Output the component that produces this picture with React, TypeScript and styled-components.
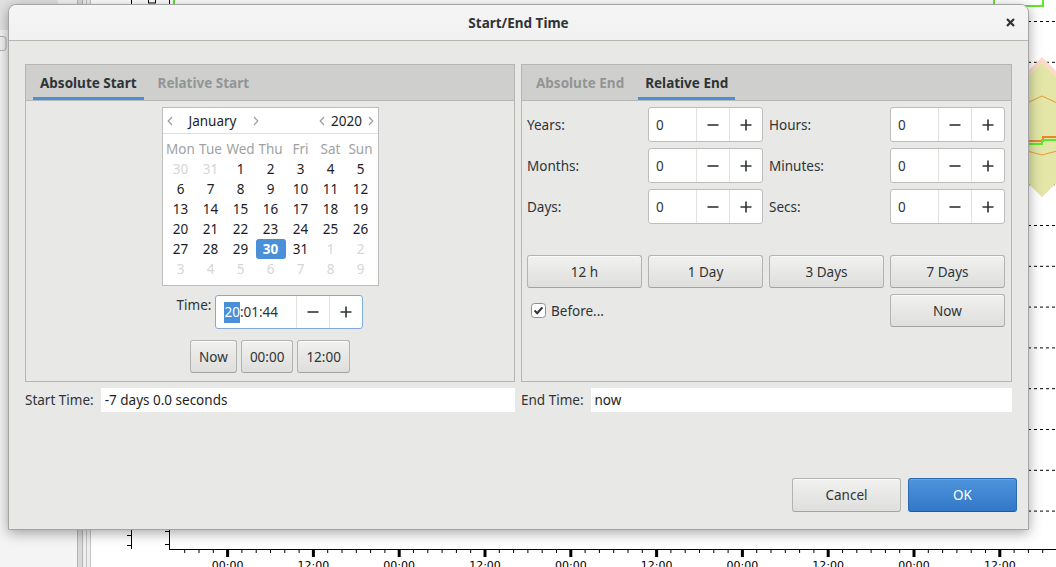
import React from "react";
import styled, { createGlobalStyle } from "styled-components";

const GlobalStyle = createGlobalStyle`
  html, body {
    margin: 0;
    padding: 0;
  }
  body {
    font-family: "Noto Sans", "Open Sans", sans-serif;
    font-size: 13.5px;
    color: #2e3436;
    overflow: hidden;
  }
`;

const Desktop = styled.div`
  position: relative;
  width: 1056px;
  height: 567px;
  overflow: hidden;
  background: #fff;
`;

const Chart = styled.svg`
  display: block;
`;

const Dialog = styled.div`
  position: absolute;
  left: 8px;
  top: 4px;
  width: 1021px;
  height: 526px;
  box-sizing: border-box;
  border: 1px solid #a4a4a2;
  border-radius: 8px 8px 0 0;
  background: #e8e8e7;
  box-shadow: 0 3px 13px rgba(0, 0, 0, 0.35);
  display: flex;
  flex-direction: column;
`;

const TitleBar = styled.div`
  height: 36px;
  box-sizing: border-box;
  flex: none;
  display: grid;
  grid-template-columns: 1fr auto 1fr;
  align-items: center;
  background: linear-gradient(#f5f5f5, #f1f1f1);
  border-bottom: 1px solid #b6b6b3;
  border-radius: 7px 7px 0 0;
`;

const Title = styled.div`
  grid-column: 2;
  font-weight: bold;
`;

const CloseButton = styled.div`
  justify-self: end;
  margin-right: 13px;
  display: flex;
`;

const Body = styled.div`
  flex: 1;
  display: flex;
  flex-direction: column;
  padding: 23px 16px 0;
`;

const PanelGrid = styled.div`
  display: grid;
  grid-template-columns: 490px 491px;
  grid-template-rows: 318px 24px;
  column-gap: 6px;
  row-gap: 6px;
`;

const Panel = styled.div`
  box-sizing: border-box;
  border: 1px solid #b6b6b3;
  display: flex;
  flex-direction: column;
`;

const TabHeader = styled.div`
  height: 36px;
  box-sizing: border-box;
  flex: none;
  display: flex;
  gap: 7px;
  padding-left: 7px;
  background: #cfcfcd;
  border-bottom: 1px solid #b6b6b3;
`;

const Tab = styled.div<{ $active?: boolean }>`
  box-sizing: border-box;
  display: flex;
  align-items: center;
  padding: 3px 7px 0;
  font-weight: bold;
  color: ${(p) => (p.$active ? "#2e3436" : "#929595")};
  border-bottom: 3px solid ${(p) => (p.$active ? "#4a90d9" : "transparent")};
`;

const StartBody = styled.div`
  display: flex;
  flex-direction: column;
  align-items: center;
  padding-top: 6px;
`;

const Calendar = styled.div`
  width: 217px;
  height: 179px;
  box-sizing: border-box;
  background: #fff;
  border: 1px solid #bdbdbb;
`;

const CalHeader = styled.div`
  height: 26px;
  box-sizing: border-box;
  border-bottom: 1px solid #dfdfdd;
  display: flex;
  justify-content: space-between;
  align-items: center;
`;

const CalGroup = styled.div`
  display: flex;
  align-items: center;
`;

const Arrow = styled.div<{ $w?: number }>`
  width: ${(p) => p.$w ?? 14}px;
  display: flex;
  justify-content: center;
`;

const CalLabel = styled.div<{ $w: number }>`
  width: ${(p) => p.$w}px;
  text-align: center;
  color: #1e1e1e;
`;

const DayGrid = styled.div`
  display: grid;
  grid-template-columns: repeat(7, 30px);
  grid-auto-rows: 20px;
  padding: 5px 0 0 3px;
`;

const DayCell = styled.div<{ $kind: "head" | "other" | "day" | "sel" }>`
  display: flex;
  align-items: center;
  justify-content: center;
  border-radius: 3px;
  color: ${(p) =>
    p.$kind === "head"
      ? "#a0a2a2"
      : p.$kind === "other"
      ? "#d6d6d6"
      : p.$kind === "sel"
      ? "#fff"
      : "#1e1e1e"};
  background: ${(p) => (p.$kind === "sel" ? "#4a90d9" : "transparent")};
  font-weight: ${(p) => (p.$kind === "sel" ? "bold" : "normal")};
`;

const TimeRow = styled.div`
  display: flex;
  align-items: flex-start;
  gap: 4px;
  margin-top: 9px;
`;

const TimeLabel = styled.div`
  line-height: 20px;
`;

const Spin = styled.div<{ $w: number; $h: number; $focus?: boolean }>`
  width: ${(p) => p.$w}px;
  height: ${(p) => p.$h}px;
  box-sizing: border-box;
  display: flex;
  background: #fff;
  border: 1px solid ${(p) => (p.$focus ? "#80aadb" : "#bdbdbb")};
  border-radius: 3px;
`;

const SpinEntry = styled.div`
  flex: 1;
  display: flex;
  align-items: center;
  padding-left: 7px;
`;

const SpinButton = styled.div`
  width: 33px;
  box-sizing: border-box;
  border-left: 1px solid #e2e2e0;
  display: flex;
  align-items: center;
  justify-content: center;
`;

const Selected = styled.span`
  background: #4a90d9;
  color: #fff;
  line-height: 21px;
`;

const ButtonRow = styled.div`
  display: flex;
  gap: 4px;
  margin-top: 11px;
`;

const Button = styled.div<{ $primary?: boolean; $w?: number; $h?: number }>`
  height: ${(p) => p.$h ?? 33}px;
  width: ${(p) => (p.$w ? `${p.$w}px` : "auto")};
  box-sizing: border-box;
  padding: 0 8px;
  display: flex;
  align-items: center;
  justify-content: center;
  border-radius: 3px;
  border: 1px solid ${(p) => (p.$primary ? "#2a6bb4" : "#b3b3b0")};
  border-bottom-color: ${(p) => (p.$primary ? "#215a9a" : "#a3a3a0")};
  color: ${(p) => (p.$primary ? "#fff" : "#2e3436")};
  background: ${(p) =>
    p.$primary
      ? "linear-gradient(#4d93dc, #3278c7)"
      : "linear-gradient(#f1f1f0, #dededc)"};
  box-shadow: inset 0 1px rgba(255, 255, 255, ${(p) => (p.$primary ? 0.15 : 0.8)});
`;

const EndBody = styled.div`
  padding: 6px 6px 0 5px;
`;

const FormGrid = styled.div<{ $rows: number; $top?: number }>`
  display: grid;
  grid-template-columns: repeat(4, 115px);
  grid-auto-rows: ${(p) => p.$rows}px;
  column-gap: 6px;
  row-gap: 6px;
  margin-top: ${(p) => p.$top ?? 0}px;
`;

const FieldLabel = styled.div`
  display: flex;
  align-items: center;
`;

const CheckCell = styled.div`
  display: flex;
  align-items: center;
  gap: 5px;
  padding-left: 4px;
`;

const LastCell = styled.div`
  grid-column: 4;
  display: flex;
`;

const FieldRow = styled.div`
  display: flex;
  align-items: center;
  gap: 7px;
  white-space: nowrap;
`;

const FieldEntry = styled.div`
  flex: 1;
  height: 100%;
  display: flex;
  align-items: center;
  padding-left: 4px;
  background: #fff;
  color: #1e1e1e;
`;

const Footer = styled.div`
  margin-top: auto;
  margin-right: -5px;
  padding-bottom: 17px;
  display: flex;
  justify-content: flex-end;
  gap: 7px;
`;

const Chevron = ({ dir }: { dir: "l" | "r" }) => (
  <svg width="6" height="10" viewBox="0 0 6 10">
    <path
      d={dir === "l" ? "M5 1 L1.2 5 L5 9" : "M1 1 L4.8 5 L1 9"}
      fill="none"
      stroke="#9a9c9c"
      strokeWidth="1.2"
    />
  </svg>
);

const Minus = () => (
  <svg width="12" height="12" viewBox="0 0 12 12">
    <path d="M0.5 6 H11.5" stroke="#2e3436" strokeWidth="1.6" />
  </svg>
);

const Plus = () => (
  <svg width="12" height="12" viewBox="0 0 12 12">
    <path d="M0.5 6 H11.5 M6 0.5 V11.5" stroke="#2e3436" strokeWidth="1.6" />
  </svg>
);

const Check = () => (
  <svg width="15" height="15" viewBox="0 0 15 15">
    <rect x="0.5" y="0.5" width="14" height="14" rx="3" fill="#fff" stroke="#8f8f8d" />
    <path d="M3.6 7.6 L6.2 10.2 L11.4 4.4" fill="none" stroke="#2e3436" strokeWidth="2.1" />
  </svg>
);

const CloseIcon = () => (
  <svg width="9" height="9" viewBox="0 0 9 9">
    <path d="M1 1 L8 8 M8 1 L1 8" stroke="#2e3436" strokeWidth="2.2" />
  </svg>
);

const SpinBox = ({ w, h, focus, children }: { w: number; h: number; focus?: boolean; children: React.ReactNode }) => (
  <Spin $w={w} $h={h} $focus={focus}>
    <SpinEntry>{children}</SpinEntry>
    <SpinButton>
      <Minus />
    </SpinButton>
    <SpinButton>
      <Plus />
    </SpinButton>
  </Spin>
);

const ChartBackground = () => {
  const dashes = Array.from({ length: 13 }, (_, k) => 21 + 40.8 * k);
  const ticks: React.ReactNode[] = [];
  for (let j = -4; j < 62; j++) {
    const x = 227.6 + 14.3 * j;
    if (x < 171 || x > 1056) continue;
    const major = ((j % 6) + 6) % 6 === 0;
    if (major) {
      const k = Math.round(j / 6);
      ticks.push(
        <g key={j}>
          <line x1={x} y1={549} x2={x} y2={557} stroke="#000" strokeWidth="3" />
          <text x={x} y={569} fontFamily="DejaVu Sans, sans-serif" fontSize="11" textAnchor="middle" fill="#000">
            {k % 2 === 0 ? "00:00" : "12:00"}
          </text>
        </g>
      );
    } else {
      ticks.push(<line key={j} x1={x} y1={549} x2={x} y2={553} stroke="#000" strokeWidth="1" />);
    }
  }
  return (
    <Chart width="1056" height="567" viewBox="0 0 1056 567">
      <rect x="0" y="0" width="1056" height="567" fill="#fff" />
      <rect x="0" y="0" width="77" height="567" fill="#f4f4f4" />
      <rect x="0" y="0" width="58" height="30" fill="#e2e2e2" />
      <rect x="-6" y="36.5" width="12" height="14" rx="3" fill="#f2f2f2" stroke="#b0b0b0" />
      <rect x="77" y="0" width="5" height="567" fill="#d8d8d8" />
      <rect x="82" y="0" width="8" height="567" fill="#eeeeee" />
      <line x1="77.5" y1="0" x2="77.5" y2="567" stroke="#b4b4b4" />
      <line x1="82.5" y1="0" x2="82.5" y2="567" stroke="#b4b4b4" />
      <line x1="86.5" y1="0" x2="86.5" y2="567" stroke="#c4c4c4" />
      <line x1="90.5" y1="0" x2="90.5" y2="567" stroke="#c4c4c4" />
      <rect x="148.5" y="-4" width="7" height="7" fill="none" stroke="#000" />
      <line x1="131.5" y1="0" x2="131.5" y2="549" stroke="#000" />
      <line x1="127" y1="535.5" x2="131" y2="535.5" stroke="#000" />
      <line x1="127" y1="545.5" x2="131" y2="545.5" stroke="#000" />
      <line x1="169.5" y1="0" x2="169.5" y2="549" stroke="#000" />
      <line x1="165" y1="531.5" x2="169" y2="531.5" stroke="#000" />
      <line x1="165" y1="544.5" x2="169" y2="544.5" stroke="#000" />
      <line x1="174" y1="0" x2="174" y2="6" stroke="#5fe62e" strokeWidth="2" />
      {dashes.map((y) => (
        <line key={y} x1="170" y1={y + 0.5} x2="1056" y2={y + 0.5} stroke="#000" strokeDasharray="3 3" />
      ))}
      <polygon points="1042,57 1112,127 1042,197 972,127" fill="#fbdccb" />
      <polygon points="1042,63 1109,130 1042,197 975,130" fill="#e3e6a7" />
      <polyline points="1016,108 1042,96 1068,108" fill="none" stroke="#e69a3c" strokeWidth="1" />
      <polyline points="1016,148 1042,155 1068,148" fill="none" stroke="#e69a3c" strokeWidth="1" />
      <polyline points="1016,141 1043,141 1043,137 1056,137" fill="none" stroke="#e0892a" strokeWidth="2" />
      <polyline points="1016,144 1042,144 1042,140 1056,140" fill="none" stroke="#5fe62e" strokeWidth="2" />
      <polyline points="994,0 994,6 1043,6 1043,0" fill="none" stroke="#5fe62e" strokeWidth="2" />
      <line x1="169" y1="549.5" x2="1056" y2="549.5" stroke="#000" />
      {ticks}
    </Chart>
  );
};

const HEADS = ["Mon", "Tue", "Wed", "Thu", "Fri", "Sat", "Sun"];

const buildDays = () => {
  const cells: { label: string; kind: "other" | "day" | "sel" }[] = [];
  cells.push({ label: "30", kind: "other" }, { label: "31", kind: "other" });
  for (let d = 1; d <= 31; d++) cells.push({ label: String(d), kind: d === 30 ? "sel" : "day" });
  for (let d = 1; cells.length < 42; d++) cells.push({ label: String(d), kind: "other" });
  return cells;
};

export default function App() {
  const days = buildDays();
  const fields = [
    ["Years:", "Hours:"],
    ["Months:", "Minutes:"],
    ["Days:", "Secs:"],
  ];
  return (
    <Desktop>
      <GlobalStyle />
      <ChartBackground />
      <Dialog>
        <TitleBar>
          <Title>Start/End Time</Title>
          <CloseButton>
            <CloseIcon />
          </CloseButton>
        </TitleBar>
        <Body>
          <PanelGrid>
            <Panel>
              <TabHeader>
                <Tab $active>Absolute Start</Tab>
                <Tab>Relative Start</Tab>
              </TabHeader>
              <StartBody>
                <Calendar>
                  <CalHeader>
                    <CalGroup>
                      <Arrow>
                        <Chevron dir="l" />
                      </Arrow>
                      <CalLabel $w={72}>January</CalLabel>
                      <Arrow>
                        <Chevron dir="r" />
                      </Arrow>
                    </CalGroup>
                    <CalGroup>
                      <Arrow>
                        <Chevron dir="l" />
                      </Arrow>
                      <CalLabel $w={36}>2020</CalLabel>
                      <Arrow $w={13}>
                        <Chevron dir="r" />
                      </Arrow>
                    </CalGroup>
                  </CalHeader>
                  <DayGrid>
                    {HEADS.map((h) => (
                      <DayCell key={h} $kind="head">
                        {h}
                      </DayCell>
                    ))}
                    {days.map((d, i) => (
                      <DayCell key={i} $kind={d.kind}>
                        {d.label}
                      </DayCell>
                    ))}
                  </DayGrid>
                </Calendar>
                <TimeRow>
                  <TimeLabel>Time:</TimeLabel>
                  <Spin $w={148} $h={34} $focus>
                    <SpinEntry style={{ paddingLeft: 8 }}>
                      <Selected>20</Selected>:01:44
                    </SpinEntry>
                    <SpinButton>
                      <Minus />
                    </SpinButton>
                    <SpinButton>
                      <Plus />
                    </SpinButton>
                  </Spin>
                </TimeRow>
                <ButtonRow>
                  <Button>Now</Button>
                  <Button>00:00</Button>
                  <Button>12:00</Button>
                </ButtonRow>
              </StartBody>
            </Panel>
            <Panel>
              <TabHeader>
                <Tab>Absolute End</Tab>
                <Tab $active>Relative End</Tab>
              </TabHeader>
              <EndBody>
                <FormGrid $rows={35}>
                  {fields.map(([a, b]) => (
                    <React.Fragment key={a}>
                      <FieldLabel>{a}</FieldLabel>
                      <SpinBox w={115} h={35}>0</SpinBox>
                      <FieldLabel>{b}</FieldLabel>
                      <SpinBox w={115} h={35}>0</SpinBox>
                    </React.Fragment>
                  ))}
                </FormGrid>
                <FormGrid $rows={33} $top={31}>
                  <Button>12 h</Button>
                  <Button>1 Day</Button>
                  <Button>3 Days</Button>
                  <Button>7 Days</Button>
                  <CheckCell>
                    <Check />
                    Before...
                  </CheckCell>
                  <LastCell>
                    <Button style={{ flex: 1 }}>Now</Button>
                  </LastCell>
                </FormGrid>
              </EndBody>
            </Panel>
            <FieldRow>
              Start Time:
              <FieldEntry>-7 days 0.0 seconds</FieldEntry>
            </FieldRow>
            <FieldRow>
              End Time:
              <FieldEntry>now</FieldEntry>
            </FieldRow>
          </PanelGrid>
          <Footer>
            <Button $w={109} $h={34}>
              Cancel
            </Button>
            <Button $primary $w={109} $h={34}>
              OK
            </Button>
          </Footer>
        </Body>
      </Dialog>
    </Desktop>
  );
}
